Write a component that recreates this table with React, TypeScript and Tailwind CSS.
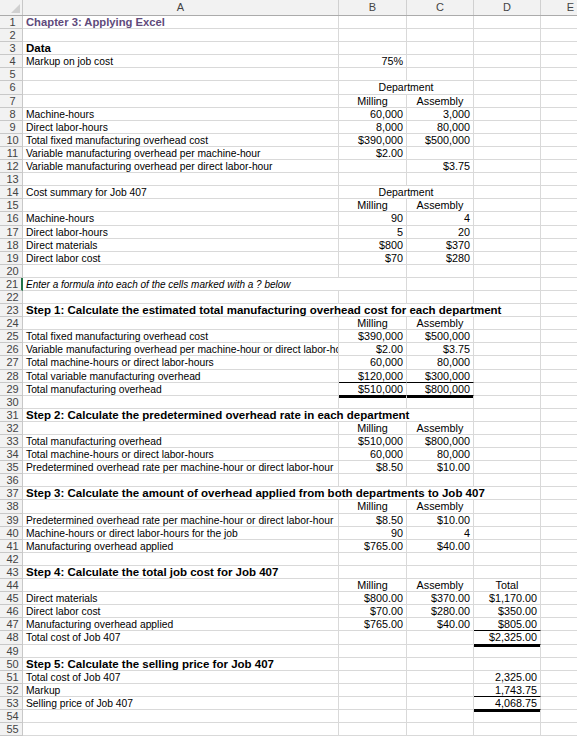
import React from "react";
import clsx from "clsx";

type Row = {
  a?: string;
  b?: string;
  c?: string;
  d?: string;
  kind?: "title" | "bold" | "italic";
  span?: 2 | 3 | 4;
  dept?: boolean;
  heads?: boolean;
  line?: "bc" | "d";
  dbl?: "bc" | "d";
};

const rows: Record<number, Row> = {
  1: { a: "Chapter 3: Applying Excel", kind: "title" },
  3: { a: "Data", kind: "bold" },
  4: { a: "Markup on job cost", b: "75%" },
  6: { dept: true },
  7: { b: "Milling", c: "Assembly", heads: true },
  8: { a: "Machine-hours", b: "60,000", c: "3,000" },
  9: { a: "Direct labor-hours", b: "8,000", c: "80,000" },
  10: { a: "Total fixed manufacturing overhead cost", b: "$390,000", c: "$500,000" },
  11: { a: "Variable manufacturing overhead per machine-hour", b: "$2.00" },
  12: { a: "Variable manufacturing overhead per direct labor-hour", c: "$3.75" },
  14: { a: "Cost summary for Job 407", dept: true },
  15: { b: "Milling", c: "Assembly", heads: true },
  16: { a: "Machine-hours", b: "90", c: "4" },
  17: { a: "Direct labor-hours", b: "5", c: "20" },
  18: { a: "Direct materials", b: "$800", c: "$370" },
  19: { a: "Direct labor cost", b: "$70", c: "$280" },
  21: { a: "Enter a formula into each of the cells marked with a ? below", kind: "italic", span: 2 },
  23: { a: "Step 1: Calculate the estimated total manufacturing overhead cost for each department", kind: "bold", span: 4 },
  24: { b: "Milling", c: "Assembly", heads: true },
  25: { a: "Total fixed manufacturing overhead cost", b: "$390,000", c: "$500,000" },
  26: { a: "Variable manufacturing overhead per machine-hour or direct labor-hour", b: "$2.00", c: "$3.75" },
  27: { a: "Total machine-hours or direct labor-hours", b: "60,000", c: "80,000" },
  28: { a: "Total variable manufacturing overhead", b: "$120,000", c: "$300,000", line: "bc" },
  29: { a: "Total manufacturing overhead", b: "$510,000", c: "$800,000", dbl: "bc" },
  31: { a: "Step 2: Calculate the predetermined overhead rate in each department", kind: "bold", span: 3 },
  32: { b: "Milling", c: "Assembly", heads: true },
  33: { a: "Total manufacturing overhead", b: "$510,000", c: "$800,000" },
  34: { a: "Total machine-hours or direct labor-hours", b: "60,000", c: "80,000" },
  35: { a: "Predetermined overhead rate per machine-hour or direct labor-hour", b: "$8.50", c: "$10.00" },
  37: { a: "Step 3: Calculate the amount of overhead applied from both departments to Job 407", kind: "bold", span: 4 },
  38: { b: "Milling", c: "Assembly", heads: true },
  39: { a: "Predetermined overhead rate per machine-hour or direct labor-hour", b: "$8.50", c: "$10.00" },
  40: { a: "Machine-hours or direct labor-hours for the job", b: "90", c: "4" },
  41: { a: "Manufacturing overhead applied", b: "$765.00", c: "$40.00" },
  43: { a: "Step 4: Calculate the total job cost for Job 407", kind: "bold" },
  44: { b: "Milling", c: "Assembly", d: "Total", heads: true },
  45: { a: "Direct materials", b: "$800.00", c: "$370.00", d: "$1,170.00" },
  46: { a: "Direct labor cost", b: "$70.00", c: "$280.00", d: "$350.00" },
  47: { a: "Manufacturing overhead applied", b: "$765.00", c: "$40.00", d: "$805.00", line: "d" },
  48: { a: "Total cost of Job 407", d: "$2,325.00", dbl: "d" },
  50: { a: "Step 5: Calculate the selling price for Job 407", kind: "bold" },
  51: { a: "Total cost of Job 407", d: "2,325.00" },
  52: { a: "Markup", d: "1,743.75", line: "d" },
  53: { a: "Selling price of Job 407", d: "4,068.75", dbl: "d" },
};

const grid = "border-r border-b border-[#d9d9d9]";
const widths = ["w-[316px]", "w-[68px]", "w-[67px]", "w-[67px]", "w-[60px]"];
const spanWidths: Record<number, string> = { 2: "w-[384px]", 3: "w-[451px]", 4: "w-[518px]" };

function Cell({
  w,
  className,
  children,
}: {
  w: string;
  className?: string;
  children?: React.ReactNode;
}) {
  return <div className={clsx("h-full shrink-0 whitespace-nowrap leading-[13px]", grid, w, className)}>{children}</div>;
}

// single rule on the gridline, double rule = that line plus one 2px lower
function bottom(r: Row, col: "bc" | "d") {
  if (r.dbl === col) return "border-b-black shadow-[0_2px_0_0_#000]";
  if (r.line === col) return "border-b-black";
  return "";
}

function SheetRow({ n, r }: { n: number; r: Row }) {
  const active = n === 21;
  const labelCls =
    r.kind === "title"
      ? "font-bold text-[11.25px] text-[#604a7b]"
      : r.kind === "bold"
        ? "font-bold text-[11.5px]"
        : r.kind === "italic"
          ? "italic text-[10px]"
          : "text-[10.3px]";
  const span = r.span ?? 1;
  const num = (extra: string) => clsx("text-[10.8px]", r.heads ? "text-center text-[10.5px]" : "pr-[3px] text-right", extra);
  const cells: React.ReactNode[] = [];

  cells.push(
    <Cell key="a" w={span > 1 ? spanWidths[span] : widths[0]} className={clsx("pl-[3px]", span === 1 && "overflow-hidden", labelCls)}>
      {r.a}
    </Cell>
  );

  if (r.dept) {
    cells.push(
      <Cell key="bc" w="w-[135px]" className="text-center text-[10.5px]">
        Department
      </Cell>
    );
  } else {
    if (span < 2)
      cells.push(
        <Cell key="b" w={widths[1]} className={num(bottom(r, "bc"))}>
          {r.b}
        </Cell>
      );
    if (span < 3)
      cells.push(
        <Cell key="c" w={widths[2]} className={num(bottom(r, "bc"))}>
          {r.c}
        </Cell>
      );
  }
  if (span < 4)
    cells.push(
      <Cell key="d" w={widths[3]} className={num(bottom(r, "d"))}>
        {r.d}
      </Cell>
    );
  cells.push(<Cell key="e" w={widths[4]} />);

  return (
    <div className="flex h-[13.1px]">
      <div
        className={clsx(
          "h-full w-[23px] shrink-0 border-b border-[#c8c8c8] bg-[#f2f2f2] pl-[3px] text-center leading-[13px] text-[11px] text-[#444]",
          active ? "border-r-2 border-r-[#217346]" : "border-r"
        )}
      >
        {n}
      </div>
      {cells}
    </div>
  );
}

export default function App() {
  const nums = Array.from({ length: 55 }, (_, i) => i + 1);
  return (
    <div className="h-[738px] w-[577px] overflow-hidden bg-white font-['Liberation_Sans',Arial,sans-serif] text-[10.5px] text-black">
      <div className="flex h-[16px] border-b border-[#ababab] bg-[#f2f2f2] text-[11px] leading-[15px] text-[#444]">
        <div className="relative h-full w-[23px] shrink-0 border-r border-[#c8c8c8]">
          <svg className="absolute bottom-[2px] right-[2px]" width="9" height="9" viewBox="0 0 9 9">
            <polygon points="9,0 9,9 0,9" fill="#d0d0d0" />
          </svg>
        </div>
        {["A", "B", "C", "D", "E"].map((c, i) => (
          <div key={c} className={clsx("h-full shrink-0 border-r border-[#d0d0d0] text-center", widths[i])}>
            {c}
          </div>
        ))}
      </div>
      {nums.map((n) => (
        <SheetRow key={n} n={n} r={rows[n] ?? {}} />
      ))}
    </div>
  );
}
